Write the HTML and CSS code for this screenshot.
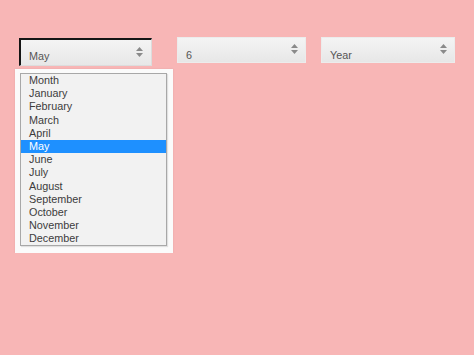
FILE: index.html
```html
<!DOCTYPE html>
<html lang="en">

<head>
	<meta charset="UTF-8" />
	<title>Date picker</title>
	<link rel="stylesheet" href="styles.css">
</head>

<body>
	<div class="date-row">
		<div class="field field-month">
			<div class="select-box is-open">
				<span class="select-value">May</span>
				<svg class="select-arrows" width="7" height="10" viewBox="0 0 7 10">
					<path d="M3.5 0 L7 4 L0 4 Z M0 6 L7 6 L3.5 10 Z" fill="#8a8a8a" />
				</svg>
			</div>
			<div class="month-menu">
				<ul class="option-list">
					<li>Month</li>
					<li>January</li>
					<li>February</li>
					<li>March</li>
					<li>April</li>
					<li class="selected">May</li>
					<li>June</li>
					<li>July</li>
					<li>August</li>
					<li>September</li>
					<li>October</li>
					<li>November</li>
					<li>December</li>
				</ul>
			</div>
		</div>
		<div class="field field-day">
			<div class="select-box">
				<span class="select-value">6</span>
				<svg class="select-arrows" width="7" height="10" viewBox="0 0 7 10">
					<path d="M3.5 0 L7 4 L0 4 Z M0 6 L7 6 L3.5 10 Z" fill="#8a8a8a" />
				</svg>
			</div>
		</div>
		<div class="field field-year">
			<div class="select-box">
				<span class="select-value">Year</span>
				<svg class="select-arrows" width="7" height="10" viewBox="0 0 7 10">
					<path d="M3.5 0 L7 4 L0 4 Z M0 6 L7 6 L3.5 10 Z" fill="#8a8a8a" />
				</svg>
			</div>
		</div>
	</div>
</body>

</html>
```

FILE: styles.css
```css
body {
	font-family: "Liberation Sans", Arial, sans-serif;
	background-color: #f8b6b6;
	margin: 0;
	padding: 37px 0 0 19px;
}

.date-row {
	display: flex;
	align-items: flex-start;
}

.field {
	display: flex;
	flex-direction: column;
}

.field-month {
	width: 133px;
	margin-right: 25px;
}

.field-day {
	width: 129px;
	margin-right: 15px;
}

.field-year {
	width: 134px;
}

.select-box {
	box-sizing: border-box;
	height: 26px;
	display: flex;
	align-items: flex-end;
	justify-content: space-between;
	padding: 0 7px 1px 8px;
	background: linear-gradient(#f4f4f4, #e7e7e7);
	border: 1px solid #ececec;
	color: #555;
	font-size: 10.8px;
}

.select-box .select-arrows {
	align-self: flex-start;
	margin-top: 6px;
}

.select-box.is-open {
	height: 28px;
	margin-top: 1px;
	border-top: 2px solid #151515;
	border-left: 2px solid #151515;
	border-right: 1px solid #dcdcdc;
	border-bottom: 1px solid #dcdcdc;
	padding-left: 8px;
	padding-right: 8px;
	padding-bottom: 3px;
}

.select-box.is-open .select-arrows {
	margin-top: 7px;
}

.month-menu {
	width: 158px;
	margin: 3px 0 0 -4px;
	box-sizing: border-box;
	padding: 4px 6px 7px 5px;
	background-color: #fbfbfb;
	box-shadow: 0 0 2px rgba(0, 0, 0, 0.08);
}

.option-list {
	list-style: none;
	margin: 0;
	padding: 0;
	background-color: #f2f2f2;
	border: 1px solid #a8a8a8;
	box-shadow: 1px 1px 1px rgba(0, 0, 0, 0.1);
}

.option-list li {
	height: 13.2px;
	line-height: 13.2px;
	padding-left: 8px;
	font-size: 10.8px;
	color: #3c3c3c;
}

.option-list li.selected {
	background-color: #1e90ff;
	color: #fff;
}
```
